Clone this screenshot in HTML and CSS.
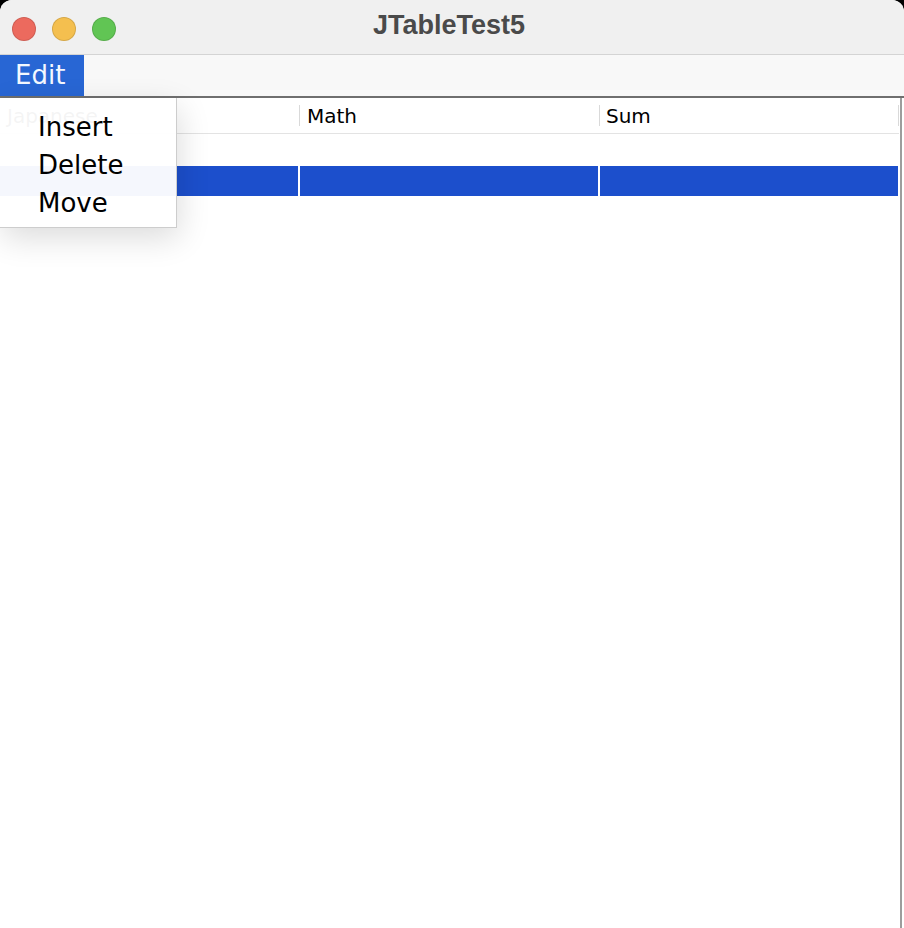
FILE: index.html
```html
<!DOCTYPE html>
<html>
<head>
<meta charset="utf-8">
<title>JTableTest5</title>
<link rel="stylesheet" href="styles.css">
</head>
<body>
<div class="window">
  <div class="titlebar">
    <div class="lights">
      <span class="light red"></span>
      <span class="light yellow"></span>
      <span class="light green"></span>
    </div>
    <div class="title">JTableTest5</div>
    <div class="spacer"></div>
  </div>
  <div class="menubar">
    <span class="menu active">Edit</span>
  </div>
  <div class="content">
    <div class="viewport">
      <div class="table">
        <div class="thead">
          <div class="th"><span class="label">Japanese</span><span class="sep"></span></div>
          <div class="th"><span class="label">Math</span><span class="sep"></span></div>
          <div class="th last"><span class="label">Sum</span><span class="sep"></span></div>
        </div>
        <div class="row">
          <div class="td"></div>
          <div class="td"></div>
          <div class="td last"></div>
        </div>
        <div class="row selected">
          <div class="td"></div>
          <div class="td"></div>
          <div class="td last"></div>
        </div>
      </div>
    </div>
  </div>
  <div class="popup">
    <div class="item">Insert</div>
    <div class="item">Delete</div>
    <div class="item">Move</div>
  </div>
</div>
</body>
</html>
```
FILE: styles.css
```css
html, body {
  margin: 0;
  padding: 0;
  background: #000;
}
.window {
  position: relative;
  width: 904px;
  height: 928px;
  background: #fff;
  border-radius: 12px 12px 0 0;
  overflow: hidden;
  font-family: "DejaVu Sans", "Noto Sans", sans-serif;
  display: flex;
  flex-direction: column;
}
.titlebar {
  height: 54px;
  background: #f0f0f0;
  border-bottom: 1px solid #d4d4d4;
  display: grid;
  grid-template-columns: 1fr auto 1fr;
  align-items: center;
}
.lights {
  display: flex;
  gap: 16px;
  padding-left: 12px;
  padding-top: 3px;
}
.light {
  width: 22px;
  height: 22px;
  border-radius: 50%;
  border: 1px solid rgba(0,0,0,0.12);
}
.red { background: #ec6a5e; }
.yellow { background: #f4bf4f; }
.green { background: #61c554; }
.title {
  font-family: "Liberation Sans", Arial, sans-serif;
  font-weight: bold;
  font-size: 27px;
  line-height: 50px;
  color: #4a4a4a;
  padding-bottom: 4px;
  padding-right: 6px;
}
.menubar {
  height: 41px;
  background: #f8f8f8;
  display: flex;
}
.menu {
  font-size: 26px;
  line-height: 41px;
  padding: 0 19px 0 15px;
  color: #222;
}
.menu.active {
  background: #2866d4;
  color: #f4f8ff;
}
.content {
  flex: 1;
  border-top: 2px solid #6f6f6f;
  display: flex;
}
.viewport {
  width: 900px;
  border-right: 2px solid #9d9d9d;
}
.table {
  width: 899px;
}
.thead {
  display: flex;
  height: 35px;
  border-bottom: 1px solid #e3e3e3;
}
.th {
  width: 300px;
  display: flex;
  align-items: center;
  justify-content: space-between;
  font-size: 20px;
  color: #000;
}
.th.last { width: 299px; }
.th .label { padding-left: 7px; }
.th.last .label { padding-left: 6px; }
.sep {
  width: 1px;
  height: 21px;
  background: #d9d9d9;
}
.row {
  display: flex;
  height: 32px;
}
.td {
  width: 298px;
  height: 30px;
  margin-right: 2px;
}
.td.last { width: 298px; margin-right: 1px; }
.row.selected .td { background: #1c4fcc; }
.popup {
  position: absolute;
  left: 0;
  top: 98px;
  width: 177px;
  height: 130px;
  box-sizing: border-box;
  padding-top: 10px;
  background: rgba(255,255,255,0.955);
  border-right: 1px solid #cdcdcd;
  border-bottom: 1px solid #cdcdcd;
  box-shadow: 2px 10px 30px rgba(0,0,0,0.14);
}
.item {
  font-size: 26px;
  line-height: 38px;
  padding-left: 38px;
  color: #000;
}
```
